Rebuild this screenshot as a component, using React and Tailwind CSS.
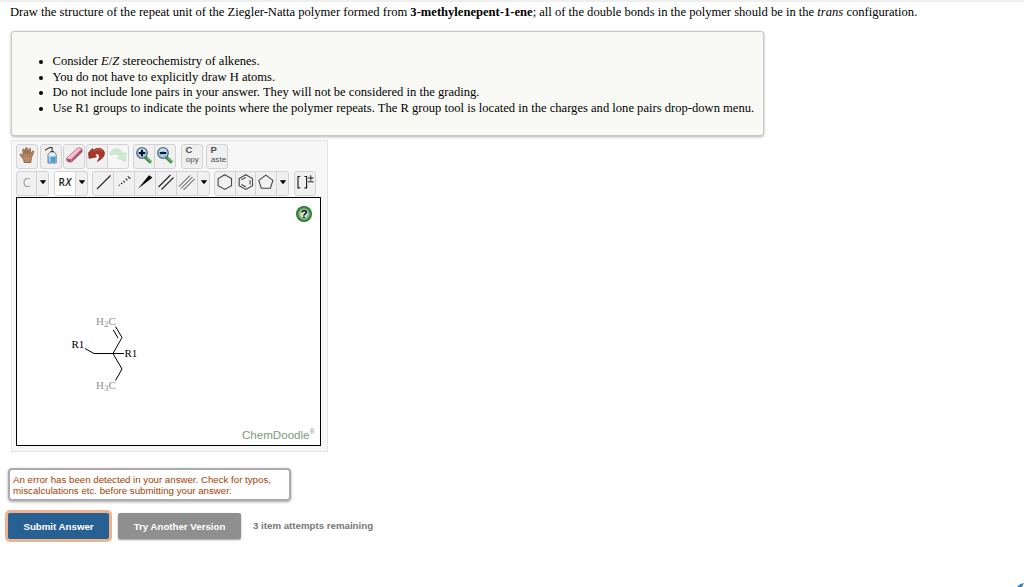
import React from "react";
import clsx from "clsx";

const HandIcon = () => (
  <svg width="19" height="21" viewBox="0 0 19 21">
    <path
      d="M6.2 17.5 L5.6 14.6 L2.6 10.6 C1.6 9.2 2.6 8.4 3.8 9.3 L5.5 10.8 L4.7 5.4 C4.5 3.8 6 3.5 6.4 5 L7.5 9 L7.6 3.6 C7.7 2 9.2 2 9.3 3.6 L9.7 8.8 L11 4.2 C11.4 2.9 12.8 3.2 12.6 4.7 L12 9.5 L14.2 6.5 C15 5.4 16.2 6.1 15.6 7.4 L13.4 12.6 L12.8 17.5 Z"
      fill="#bb8b66"
      stroke="#795439"
      strokeWidth="0.8"
    />
    <path d="M7.5 9.5 L8 12 M9.7 9 V12 M12 9.5 L11.2 12" stroke="#986c4b" strokeWidth="0.7" fill="none" />
  </svg>
);

const SprayIcon = () => (
  <svg width="19" height="21" viewBox="0 0 19 21">
    <path d="M3 5.3 L7.5 2.6 H10.2 V6" fill="none" stroke="#444" strokeWidth="1.1" />
    <path d="M6 9.5 L8.5 6.5 H12 L14.2 9.5 V18 H6 Z" fill="#e9f1f5" stroke="#667078" strokeWidth="0.9" />
    <rect x="6.5" y="11.5" width="7.2" height="6" fill="#4a9ed4" />
    <path d="M8 9.5 V16.8" stroke="#c2e5f5" strokeWidth="1.2" />
    <path d="M8.5 6.8 H12" stroke="#333" strokeWidth="1" />
  </svg>
);

const EraserIcon = () => (
  <svg width="19" height="21" viewBox="0 0 19 21">
    <path d="M1.6 13 L12 3.4 C13 2.6 15.7 2.4 17 3.8 L17.2 7 L7 16.8 C5.2 17.9 2 16.6 1.6 15.2 Z" fill="#a9566e" stroke="#925066" strokeWidth="0.5" />
    <path d="M1.9 13 L12.3 3.6 C13.5 2.8 15.7 2.9 16.6 4 L6.8 13.8 C5.3 14.6 2.8 14 1.9 13 Z" fill="#f6bdd2" />
    <path d="M6.7 13.9 V16.7" stroke="#dc96aa" strokeWidth="0.6" />
  </svg>
);

const UndoIcon = () => (
  <svg width="20" height="21" viewBox="0 0 20 21">
    <path
      d="M1.4 8 L5.3 3.4 L6.2 5.3 C10 2.2 16 2.8 17.3 7 C18.2 10.4 15.3 14.3 10.3 16.5 C12.4 13.4 13.1 10.8 11.7 9.5 C10.6 8.4 9.2 8.7 8.2 9.3 L9.4 11.9 L2.1 13.4 Z"
      fill="#aa3528"
      stroke="#71241a"
      strokeWidth="0.6"
    />
    <path d="M6.5 6.4 C9.5 4 14 3.7 15.8 6" fill="none" stroke="#d26b5c" strokeWidth="0.8" />
  </svg>
);

const RedoIcon = () => (
  <svg width="20" height="21" viewBox="0 0 20 21">
    <path
      d="M18.1 7.8 L17.4 16.5 L9.7 13.3 L12 11.2 C10 8.6 6.3 8.4 2.2 10 C1.8 6 6.3 2.8 10.2 4.2 C12.4 4.9 14.2 6.7 15.3 9 Z"
      fill="#ccebcf"
      stroke="#b7dfbc"
      strokeWidth="0.7"
    />
  </svg>
);

const ZoomIcon = ({ plus }) => (
  <svg width="20" height="21" viewBox="0 0 20 21">
    <path d="M11 12 L17 17.5" stroke="#39843d" strokeWidth="3.2" />
    <path d="M12.5 12.8 L17.3 17" stroke="#75c46a" strokeWidth="1.2" />
    <circle cx="8" cy="8" r="5.3" fill="#9dc9ec" stroke="#606c78" strokeWidth="1.3" />
    <path d="M4.5 6.5 A4 4 0 0 1 11.5 6.5" fill="none" stroke="#d4ebf9" strokeWidth="1.3" />
    <path d="M4.8 8 H11.2" stroke="#061420" strokeWidth="2" />
    {plus && <path d="M8 4.8 V11.2" stroke="#061420" strokeWidth="2" />}
  </svg>
);

const LetterIcon = ({ first, rest }) => (
  <svg width="20" height="21" viewBox="0 0 20 21" className="shrink-0 [font-family:'Liberation_Sans',Arial,sans-serif]" fill="#4d4d4d">
    <text x="3.5" y="8.2" fontSize="9.5" fontWeight="bold">{first}</text>
    <text x="3.8" y="17" fontSize="6.8" textLength={rest === "opy" ? 13 : 15.5} lengthAdjust="spacingAndGlyphs">{rest}</text>
  </svg>
);

const LineTool = ({ type }) => (
  <svg width="20" height="21" viewBox="0 0 20 21" fill="none" stroke="#222" strokeWidth="1.1">
    {type === "single" && <path d="M4 17 L17.5 3.5" />}
    {type === "recessed" && (
      <path d="M4.8 12.8 L5.6 13.6 M7 10.8 L8.2 12 M9.3 8.8 L10.8 10.3 M11.6 6.6 L13.4 8.4 M13.8 4.3 L16.3 6.8" />
    )}
    {type === "wedge" && <path d="M3 16.8 L14 3.2 L17.4 5.6 Z" fill="#000" stroke="none" />}
    {type === "double" && <path d="M2.5 15 L14.5 3 M5.5 17.5 L17.5 5.5" />}
    {type === "triple" && <path d="M2 14.5 L13 3.5 M4 16.5 L15.5 5 M6.5 18 L17.5 7" strokeWidth="0.9" />}
  </svg>
);

const RingTool = ({ type }) => (
  <svg width="20" height="21" viewBox="0 0 20 21" fill="none" stroke="#444" strokeWidth="1.1">
    {type === "pentagon" ? (
      <path d="M10 3 L17.2 8.3 L14.6 16.3 H5.4 L2.8 8.3 Z" />
    ) : (
      <path d="M10 2.6 L16.8 6.4 V13.8 L10 17.6 L3.2 13.8 V6.4 Z" />
    )}
    {type === "benzene" && <path d="M5.6 7.8 L10 5.3 M14.3 7.9 V12.6 M10 15.1 L5.6 12.6" />}
  </svg>
);

const BracketTool = () => (
  <svg width="20" height="21" viewBox="0 0 20 21" fill="none" stroke="#222" strokeWidth="1.2">
    <path d="M5.2 4.5 H3 V15.8 H5.2 M9.4 4.5 H11.6 V15.8 H9.4" />
    <path d="M13 6 H18.6 M15.8 3.3 V8.7 M13 9.8 H18.6" strokeWidth="1" />
  </svg>
);

const Arrow = () => (
  <svg width="10" height="21" viewBox="0 0 10 21">
    <path d="M1.8 8.2 H8.2 L5 12.2 Z" fill="#000" />
  </svg>
);

// a button group, its children share one border
const Group = ({ children, className }) => (
  <div
    className={clsx(
      "flex h-[25px] shrink-0 rounded-[3px] border border-[#d3d3d3] bg-[#f0f0f0] overflow-hidden divide-x divide-[#d3d3d3]",
      className
    )}
  >
    {children}
  </div>
);

const Tool = ({ children, label, className }) => (
  <button aria-label={label} className={clsx("flex flex-1 min-w-0 items-center justify-center pb-[2px]", className)}>
    {children}
  </button>
);

const Drop = () => (
  <button aria-label="More" className="flex w-[11px] shrink-0 items-center justify-center pb-[2px]">
    <Arrow />
  </button>
);

const Molecule = () => (
  <svg width="303" height="247" viewBox="17 198 303 247" className="[font-family:'Liberation_Serif',serif]">
    <g fill="none" stroke="#000" strokeWidth="1">
      <path d="M115.5 326.5 L122 337.5 L113 353.5 L122 369 L115.5 380.5" />
      <path d="M113.3 330 L118 338" />
      <path d="M85 348.5 L94 353.5 H124" />
    </g>
    <g fontSize="11" fill="#8f8f8f">
      <text x="96" y="325">H<tspan fontSize="9" dy="2">2</tspan><tspan dy="-2">C</tspan></text>
      <text x="96" y="389">H<tspan fontSize="9" dy="2">3</tspan><tspan dy="-2">C</tspan></text>
    </g>
    <g fontSize="11" fill="#000">
      <text x="71.5" y="348">R1</text>
      <text x="124.5" y="357">R1</text>
    </g>
    <g className="[font-family:'Liberation_Sans',Arial,sans-serif]" fill="#7d9b78">
      <text x="242" y="438.7" fontSize="11.5" textLength="67.5" lengthAdjust="spacingAndGlyphs">ChemDoodle</text>
      <text x="309.5" y="434" fontSize="7">®</text>
    </g>
    <defs>
      <radialGradient id="help">
        <stop offset="0" stopColor="#eef7ee" />
        <stop offset="0.4" stopColor="#c4dfc4" />
        <stop offset="0.85" stopColor="#32803a" />
        <stop offset="1" stopColor="#246b2b" />
      </radialGradient>
    </defs>
    <circle cx="304" cy="214" r="8" fill="url(#help)" />
    <text x="304" y="218" fontSize="11" fontWeight="bold" textAnchor="middle" className="[font-family:'Liberation_Sans',sans-serif]">?</text>
  </svg>
);

const Sketcher = () => (
  <div className="mt-[4px] ml-[11px] h-[312px] w-[317px] border border-[#e4e4e4] bg-[#f7f7f7] pl-[4px] pt-[3px]">
    <div className="flex">
      <Group className="w-[22px]"><Tool label="Move"><HandIcon /></Tool></Group>
      <Group className="ml-[2px] w-[22px]"><Tool label="Clear"><SprayIcon /></Tool></Group>
      <Group className="ml-[1px] w-[22px]"><Tool label="Erase"><EraserIcon /></Tool></Group>
      <Group className="ml-[1px] w-[43px]">
        <Tool label="Undo"><UndoIcon /></Tool>
        <Tool label="Redo" className="bg-[#f6f6f6]"><RedoIcon /></Tool>
      </Group>
      <Group className="ml-[4px] w-[43px]">
        <Tool label="Zoom in"><ZoomIcon plus /></Tool>
        <Tool label="Zoom out"><ZoomIcon /></Tool>
      </Group>
      <Group className="ml-[5px] w-[22px]"><Tool label="Copy"><LetterIcon first="C" rest="opy" /></Tool></Group>
      <Group className="ml-[3px] w-[22px]"><Tool label="Paste"><LetterIcon first="P" rest="aste" /></Tool></Group>
    </div>
    <div className="mt-[2px] flex">
      <Group className="w-[33px]">
        <Tool className="text-[12px] text-[#999] [font-family:'Open_Sans',sans-serif]">C</Tool>
        <Drop />
      </Group>
      <Group className="ml-[5px] w-[34px]">
        <Tool className="bg-white text-[10px] tracking-[0.4px] font-semibold text-[#222] [font-family:'Open_Sans',sans-serif]">R<i>X</i></Tool>
        <Drop />
      </Group>
      <Group className="ml-[4px] w-[118px]">
        <Tool label="Single bond"><LineTool type="single" /></Tool>
        <Tool label="Recessed bond"><LineTool type="recessed" /></Tool>
        <Tool label="Wedge bond"><LineTool type="wedge" /></Tool>
        <Tool label="Double bond"><LineTool type="double" /></Tool>
        <Tool label="Triple bond"><LineTool type="triple" /></Tool>
        <Drop />
      </Group>
      <Group className="ml-[4px] w-[75px]">
        <Tool label="Hexane"><RingTool type="hexagon" /></Tool>
        <Tool label="Benzene"><RingTool type="benzene" /></Tool>
        <Tool label="Pentane"><RingTool type="pentagon" /></Tool>
        <Drop />
      </Group>
      <Group className="ml-[5px] w-[22px]"><Tool label="Brackets"><BracketTool /></Tool></Group>
    </div>
    <div className="mt-[1px] h-[249px] w-[305px] border border-black bg-white">
      <Molecule />
    </div>
  </div>
);

const App = () => {
  return (
    <div className="relative h-[587px] w-[1024px] overflow-hidden bg-white text-black [font-family:'Liberation_Serif','Times_New_Roman',serif]">
      <div className="h-[2px] bg-[#efefef]" />
      <p className="ml-[10px] mt-[2px] h-[16px] whitespace-nowrap text-[12.59px] leading-[16px]">
        Draw the structure of the repeat unit of the Ziegler-Natta polymer formed from{" "}
        <b>3-methylenepent-1-ene</b>; all of the double bonds in the polymer should be in the <i>trans</i>{" "}
        configuration.
      </p>

      <div className="ml-[11px] mt-[11px] h-[105px] w-[753px] rounded-[3px] border border-[#c8c8c8] bg-[#f9faf5] pt-[22px] shadow-[0_1px_3px_rgba(0,0,0,0.3)]">
        <ul className="ml-[40.5px] list-disc whitespace-nowrap text-[12.59px] leading-[15.5px]">
          <li>Consider <i>E</i>/<i>Z</i> stereochemistry of alkenes.</li>
          <li>You do not have to explicitly draw H atoms.</li>
          <li>Do not include lone pairs in your answer. They will not be considered in the grading.</li>
          <li>
            Use R1 groups to indicate the points where the polymer repeats. The R group tool is located in the charges
            and lone pairs drop-down menu.
          </li>
        </ul>
      </div>

      <Sketcher />

      <div className="ml-[8px] mt-[16px] h-[33px] w-[283px] rounded-[4px] border-2 border-[#aaaab0] pl-[3px] pt-[4px] text-[9.7px] leading-[11px] whitespace-nowrap text-[#a34100] shadow-[0_1px_3px_rgba(0,0,0,0.35)] [font-family:'Liberation_Sans',Arial,sans-serif]">
        An error has been detected in your answer. Check for typos,
        <br />
        miscalculations etc. before submitting your answer.
      </div>

      <div className="ml-[8px] mt-[12px] flex items-center text-[9.7px] font-bold whitespace-nowrap [font-family:'Liberation_Sans',Arial,sans-serif]">
        <button className="h-[26px] w-[101px] rounded-[2px] bg-[#276092] pt-[2px] text-white shadow-[0_0_0_3px_#edb48e]">Submit Answer</button>
        <button className="ml-[9px] h-[26px] w-[123px] rounded-[2px] bg-[#8f8f8f] pt-[2px] text-white shadow-[0_1px_2px_rgba(0,0,0,0.4)]">Try Another Version</button>
        <span className="ml-[12px] text-[#777]">3 item attempts remaining</span>
      </div>

      <svg className="absolute bottom-0 right-0" width="12" height="4" viewBox="0 0 12 4">
        <path d="M5 4 L8 1.2 L12 0 L10 4 Z" fill="#2c83bd" />
      </svg>
    </div>
  );
};

export default App;
